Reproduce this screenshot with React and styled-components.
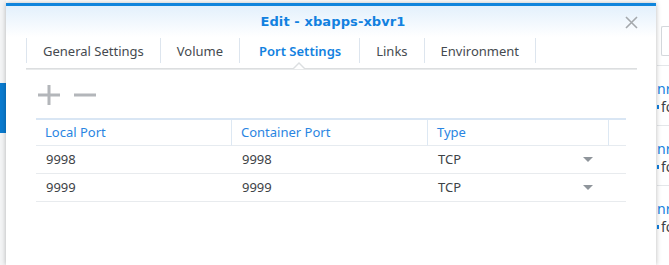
import React from "react";
import styled, { createGlobalStyle } from "styled-components";

const GlobalStyle = createGlobalStyle`
  html, body {
    margin: 0;
    padding: 0;
    background: #ffffff;
    overflow: hidden;
  }
  body {
    font-family: "Noto Sans", "Open Sans", sans-serif;
  }
`;

const tabs = ["General Settings", "Volume", "Port Settings", "Links", "Environment"];

const ports = [
  { local: "9998", container: "9998", type: "TCP" },
  { local: "9999", container: "9999", type: "TCP" },
];

function App() {
  return (
    <>
      <GlobalStyle />
      <Page>
        <LeftStrip>
          <Marker />
        </LeftStrip>

        <Dialog>
          <Header>
            <span />
            <Title>Edit - xbapps-xbvr1</Title>
            <Close aria-label="close">
              <svg width="13" height="13" viewBox="0 0 13 13">
                <path d="M1 1 L12 12 M12 1 L1 12" stroke="#a4a8ac" strokeWidth="1.6" />
              </svg>
            </Close>
          </Header>

          <TabBar>
            {tabs.map((t) => (
              <Tab key={t} $active={t === "Port Settings"}>
                {t}
              </Tab>
            ))}
          </TabBar>
          <TabRule>
            <Notch $left={267} />
          </TabRule>

          <Toolbar>
            <ToolButton aria-label="add">
              <svg width="22" height="20" viewBox="0 0 22 20">
                <rect x="0" y="8.5" width="22" height="3" fill="#b3b6ba" />
                <rect x="9.5" y="0" width="3" height="20" fill="#b3b6ba" />
              </svg>
            </ToolButton>
            <ToolButton aria-label="remove">
              <svg width="22" height="20" viewBox="0 0 22 20">
                <rect x="0" y="8.5" width="22" height="3" fill="#b3b6ba" />
              </svg>
            </ToolButton>
          </Toolbar>

          <Grid>
            <HeadCell>Local Port</HeadCell>
            <HeadCell>Container Port</HeadCell>
            <HeadCell>Type</HeadCell>
            <HeadCell $last />
            {ports.map((p) => (
              <React.Fragment key={p.local}>
                <Cell>{p.local}</Cell>
                <Cell>{p.container}</Cell>
                <Cell>
                  {p.type}
                  <Caret />
                </Cell>
                <Cell />
              </React.Fragment>
            ))}
          </Grid>
        </Dialog>

        <Behind>
          <SearchBox />
          {[0, 1, 2].map((i) => (
            <BehindItem key={i}>
              <BehindName>nr</BehindName>
              <BehindDesc>
                <Dot />
                fo
              </BehindDesc>
            </BehindItem>
          ))}
        </Behind>
      </Page>
    </>
  );
}

const Page = styled.div`
  display: flex;
  width: 669px;
  height: 265px;
  overflow: hidden;
  background: #ffffff;
`;

const LeftStrip = styled.div`
  width: 6px;
  flex: none;
  padding-top: 83px;
  background: #f4f5f6;
`;

const Marker = styled.div`
  height: 50px;
  background: #0a7bd0;
`;

const Dialog = styled.div`
  position: relative;
  z-index: 1;
  width: 650px;
  flex: none;
  margin-top: 3px;
  border-top: 3px solid #1085dc;
  background: #ffffff;
  box-shadow: 0 0 5px rgba(0, 0, 0, 0.28);
  display: flex;
  flex-direction: column;
`;

const Header = styled.div`
  height: 31px;
  display: grid;
  grid-template-columns: 1fr auto 1fr;
  align-items: center;
  background: linear-gradient(#e3f0fc, #ffffff);
`;

const Title = styled.div`
  font-family: "DejaVu Sans", Verdana, sans-serif;
  font-weight: bold;
  font-size: 13px;
  letter-spacing: 0.1px;
  color: #1281e0;
  padding-left: 4px;
`;

const Close = styled.div`
  justify-self: end;
  margin-right: 18px;
  margin-top: 1px;
  display: flex;
`;

const TabBar = styled.div`
  display: flex;
  height: 25px;
  margin-top: 1px;
  padding-left: 20px;
`;

const Tab = styled.div`
  display: flex;
  align-items: center;
  padding: ${(p) => (p.$active ? "0 18px 0 19px" : "0 16px")};
  border-left: 1px solid #dde5ee;
  font-size: 13px;
  color: ${(p) => (p.$active ? "#1281e0" : "#454a50")};
  font-weight: ${(p) => (p.$active ? 600 : 400)};
  &:last-child {
    border-right: 1px solid #dde5ee;
  }
`;

const TabRule = styled.div`
  position: relative;
  margin: 5px 19px 0 20px;
  height: 2px;
  background: linear-gradient(#d6d8da, #eef0f1);
`;

const Notch = styled.div`
  position: absolute;
  left: ${(p) => p.$left}px;
  top: -6px;
  width: 0;
  height: 0;
  border-left: 6px solid transparent;
  border-right: 6px solid transparent;
  border-bottom: 6px solid #dcdfe1;
  &::after {
    content: "";
    position: absolute;
    left: -5px;
    top: 2px;
    border-left: 5px solid transparent;
    border-right: 5px solid transparent;
    border-bottom: 5px solid #ffffff;
  }
`;

const Toolbar = styled.div`
  display: flex;
  gap: 14px;
  padding: 15px 0 0 32px;
  height: 20px;
`;

const ToolButton = styled.div`
  display: flex;
  width: 22px;
  height: 20px;
`;

const Grid = styled.div`
  display: grid;
  grid-template-columns: 196px 196px 181px 17px;
  width: 590px;
  margin: 13px 0 0 30px;
  border-top: 2px solid #d9e6f4;
  font-size: 13px;
`;

const HeadCell = styled.div`
  height: 26px;
  display: flex;
  align-items: center;
  padding-left: 9px;
  padding-bottom: 1px;
  box-sizing: border-box;
  color: #2a85e2;
  border-bottom: 1px solid #e6ebf0;
  border-right: ${(p) => (p.$last ? "none" : "1px solid #dde8f3")};
`;

const Cell = styled.div`
  position: relative;
  height: 28px;
  box-sizing: border-box;
  display: flex;
  align-items: center;
  padding-left: 10px;
  padding-bottom: 1px;
  color: #3d4246;
  border-bottom: 1px solid #e8ebee;
`;

const Caret = styled.span`
  position: absolute;
  right: 16px;
  top: 11px;
  border-left: 5px solid transparent;
  border-right: 5px solid transparent;
  border-top: 5px solid #8f959b;
`;

const Behind = styled.div`
  flex: 1;
  padding-left: 1px;
  font-size: 14px;
  display: flex;
  flex-direction: column;
`;

const SearchBox = styled.div`
  margin: 26px 0 9px 4px;
  height: 28px;
  border: 1px solid #d4d8dc;
  border-right: none;
  border-radius: 2px 0 0 2px;
`;

const BehindItem = styled.div`
  border-top: 1px solid #e4e7ea;
  height: 60px;
  padding-top: 14px;
  box-sizing: border-box;
`;

const BehindName = styled.div`
  color: #1281e0;
  line-height: 18px;
`;

const BehindDesc = styled.div`
  display: flex;
  align-items: center;
  color: #3d4246;
  line-height: 18px;
`;

const Dot = styled.span`
  width: 2px;
  height: 4px;
  background: #1281e0;
  margin-right: 2px;
`;

export default App;
